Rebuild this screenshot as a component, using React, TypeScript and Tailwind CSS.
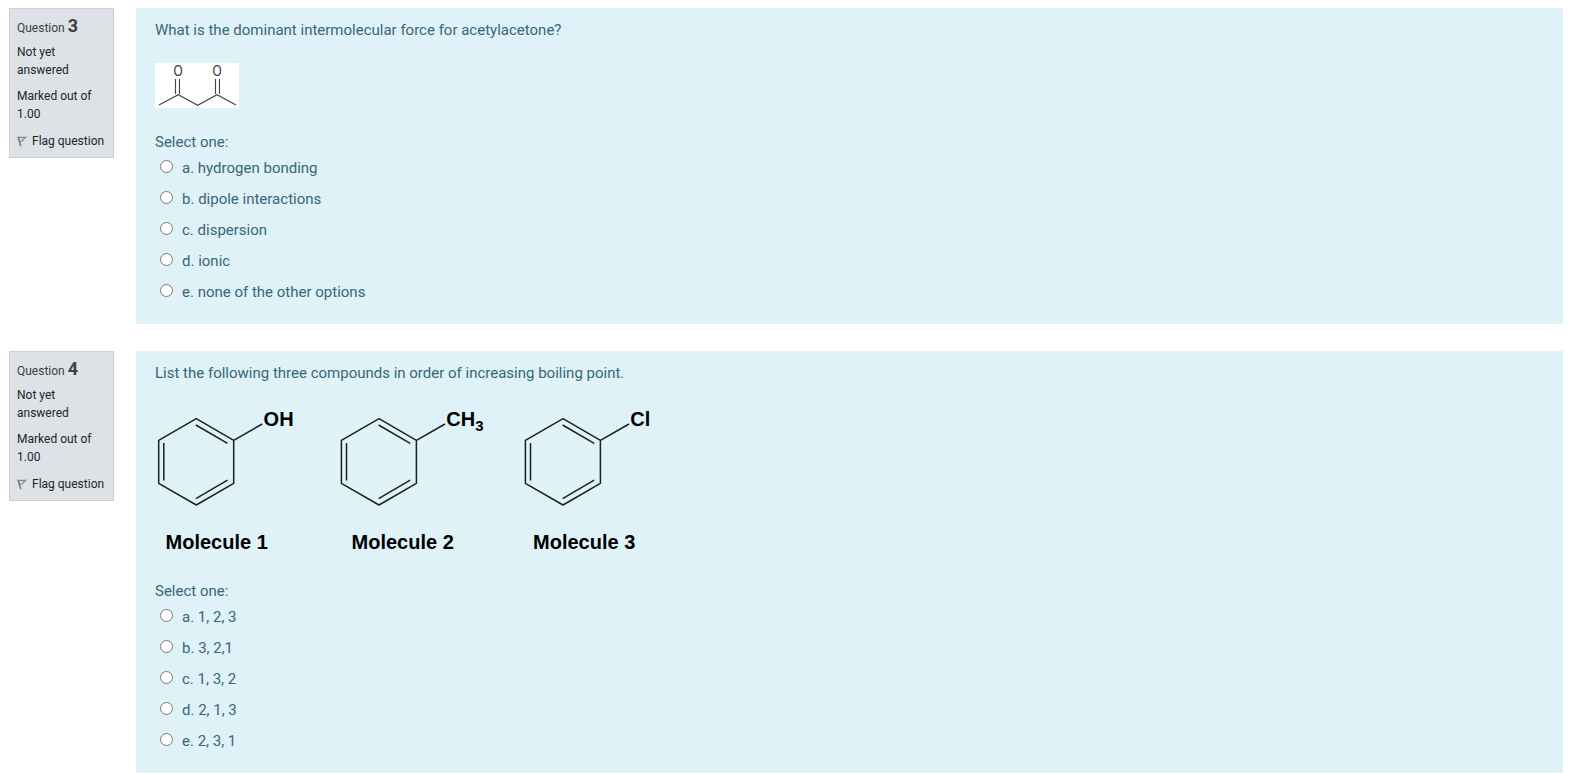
import { ReactNode, useState } from "react";

type Choice = {
  letter: string;
  text: string;
};

type QuestionProps = {
  number: number;
  prompt: string;
  figure: ReactNode;
  choices: Choice[];
};

function FlagIcon() {
  return (
    <svg viewBox="0 0 12 12" className="mt-[3px] h-3 w-3 shrink-0" fill="none" aria-hidden="true">
      <path d="M1.4 2.4 8.8 2.4 6.6 4.2 5.4 6 2.8 6.4Z" fill="#d4d4d4" stroke="#8a8a8a" strokeWidth="1.1" />
      <path d="M1 2 3.8 11.2" stroke="#808080" strokeWidth="1.6" />
    </svg>
  );
}

function Acetylacetone() {
  return (
    <svg
      viewBox="0 0 84 45"
      className="h-[45px] w-[84px] bg-white"
      fill="none"
      stroke="#444"
      strokeWidth="1.1"
    >
      <path d="M4 42 23.3 31.7 42.7 42.3 62 31.7 81 42" />
      <path d="M20.5 16V31M24.5 16V31M60.5 16V31M64.5 16V31" />
      <g className="font-[Roboto,sans-serif] text-[14px]" fill="#444" stroke="none" textAnchor="middle">
        <text x="23" y="12.6">O</text>
        <text x="62" y="12.6">O</text>
      </g>
    </svg>
  );
}

function Ring({ x, children }: { x: number; children: ReactNode }) {
  return (
    <g transform={`translate(${x} 0)`}>
      <g fill="none" stroke="#1c2022" strokeWidth="1.5" strokeLinejoin="round">
        <path d="M41.3 12.7 78.7 34.3V77.3L41.3 99 3.7 77.3V34.3Z" />
        <path d="M40.9 19 72.5 37.3M8.8 37V74.5M72.5 74.2 40.9 92.6" />
        <path d="M78.7 34.3 107.3 18" />
      </g>
      <text x="108.6" y="20">
        {children}
      </text>
    </g>
  );
}

function Molecules() {
  return (
    <svg
      viewBox="0 0 510 151"
      className="h-[151px] w-[510px] font-['Liberation_Sans',Arial,sans-serif] text-[20px] font-bold"
      fill="#000"
    >
      <Ring x={0}>OH</Ring>
      <Ring x={182.7}>
        CH
        <tspan dy="4.5" className="text-[15px]">
          3
        </tspan>
      </Ring>
      <Ring x={366.7}>Cl</Ring>
      <text x="10.5" y="142.5">Molecule 1</text>
      <text x="196.5" y="142.5">Molecule 2</text>
      <text x="378" y="142.5">Molecule 3</text>
    </svg>
  );
}

function Question({ number, prompt, figure, choices }: QuestionProps) {
  const [answer, setAnswer] = useState("");

  return (
    <section className="flex items-start gap-[22px]">
      <div className="w-[105px] shrink-0 border border-[#cad0d7] bg-[#dee2e6] p-[7px] text-xs leading-[18px] text-[#212529]">
        <h3 className="leading-5 text-[#404040]">
          Question <span className="text-lg leading-5 font-bold">{number}</span>
        </h3>
        <div className="mt-[5px]">Not yet answered</div>
        <div className="mt-2">Marked out of 1.00</div>
        <button type="button" className="mt-[9px] flex gap-[3px] whitespace-nowrap">
          <FlagIcon />
          Flag question
        </button>
      </div>

      <div className="min-w-0 flex-1 bg-[#def2f8] px-[19px] pt-[11px] pb-4 text-[15px] leading-[23px] text-[#376779]">
        <p>{prompt}</p>
        <div className="mt-[21px]">{figure}</div>
        <fieldset className="mt-[23px]">
          <legend className="leading-[22px]">Select one:</legend>
          {choices.map((choice) => {
            const id = `q${number}-${choice.letter}`;

            return (
              <div key={id} className="flex h-[31px] items-center gap-[9px] pl-[5px]">
                <input
                  id={id}
                  type="radio"
                  name={`q${number}`}
                  value={choice.letter}
                  checked={answer === choice.letter}
                  onChange={(event) => setAnswer(event.target.value)}
                  className="mb-1 h-[13px] w-[13px]"
                />
                <label htmlFor={id}>
                  {choice.letter}. {choice.text}
                </label>
              </div>
            );
          })}
        </fieldset>
      </div>
    </section>
  );
}

export default function App() {
  return (
    <main className="flex min-h-screen flex-col gap-[27px] bg-white pt-2 pr-2 pl-[9px] font-[Roboto,sans-serif]">
      <Question
        number={3}
        prompt="What is the dominant intermolecular force for acetylacetone?"
        figure={<Acetylacetone />}
        choices={[
          { letter: "a", text: "hydrogen bonding" },
          { letter: "b", text: "dipole interactions" },
          { letter: "c", text: "dispersion" },
          { letter: "d", text: "ionic" },
          { letter: "e", text: "none of the other options" },
        ]}
      />
      <Question
        number={4}
        prompt="List the following three compounds in order of increasing boiling point."
        figure={<Molecules />}
        choices={[
          { letter: "a", text: "1, 2, 3" },
          { letter: "b", text: "3, 2,1" },
          { letter: "c", text: "1, 3, 2" },
          { letter: "d", text: "2, 1, 3" },
          { letter: "e", text: "2, 3, 1" },
        ]}
      />
    </main>
  );
}
